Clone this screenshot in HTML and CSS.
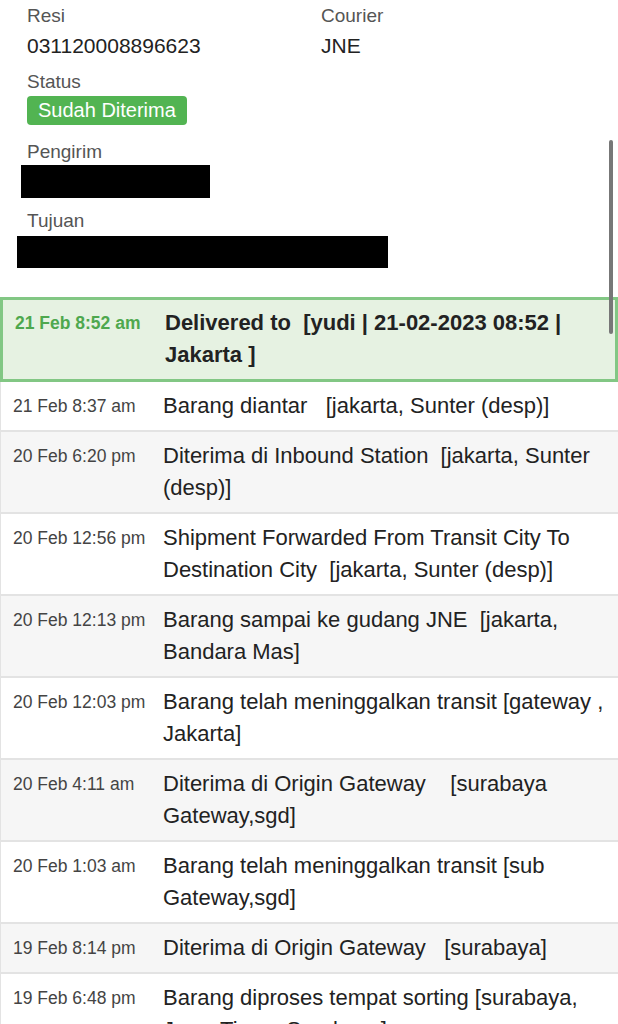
FILE: index.html
```html
<!DOCTYPE html>
<html>
<head>
<meta charset="utf-8">
<link rel="stylesheet" href="styles.css">
</head>
<body>
<div class="page">
  <section class="info">
    <div class="row2">
      <div class="field">
        <div class="label">Resi</div>
        <div class="value">031120008896623</div>
      </div>
      <div class="field">
        <div class="label">Courier</div>
        <div class="value">JNE</div>
      </div>
    </div>
    <div class="field status">
      <div class="label">Status</div>
      <span class="badge">Sudah Diterima</span>
    </div>
    <div class="field sender">
      <div class="label">Pengirim</div>
      <div class="redact redact-sender"></div>
    </div>
    <div class="field dest">
      <div class="label">Tujuan</div>
      <div class="redact redact-dest"></div>
    </div>
  </section>

  <div class="track">
    <div class="item current">
      <div class="date">21 Feb 8:52 am</div>
      <div class="desc">Delivered to&nbsp; [yudi | 21-02-2023 08:52 | Jakarta ]</div>
    </div>
    <div class="item">
      <div class="date">21 Feb 8:37 am</div>
      <div class="desc">Barang diantar&nbsp;&nbsp; [jakarta, Sunter (desp)]</div>
    </div>
    <div class="item alt">
      <div class="date">20 Feb 6:20 pm</div>
      <div class="desc">Diterima di Inbound Station&nbsp; [jakarta, Sunter (desp)]</div>
    </div>
    <div class="item">
      <div class="date">20 Feb 12:56 pm</div>
      <div class="desc">Shipment Forwarded From Transit City To Destination City&nbsp; [jakarta, Sunter (desp)]</div>
    </div>
    <div class="item alt">
      <div class="date">20 Feb 12:13 pm</div>
      <div class="desc">Barang sampai ke gudang JNE&nbsp; [jakarta, Bandara Mas]</div>
    </div>
    <div class="item">
      <div class="date">20 Feb 12:03 pm</div>
      <div class="desc">Barang telah meninggalkan transit [gateway , Jakarta]</div>
    </div>
    <div class="item alt">
      <div class="date">20 Feb 4:11 am</div>
      <div class="desc">Diterima di Origin Gateway&nbsp;&nbsp;&nbsp; [surabaya Gateway,sgd]</div>
    </div>
    <div class="item">
      <div class="date">20 Feb 1:03 am</div>
      <div class="desc">Barang telah meninggalkan transit [sub Gateway,sgd]</div>
    </div>
    <div class="item alt">
      <div class="date">19 Feb 8:14 pm</div>
      <div class="desc">Diterima di Origin Gateway&nbsp;&nbsp; [surabaya]</div>
    </div>
    <div class="item">
      <div class="date">19 Feb 6:48 pm</div>
      <div class="desc">Barang diproses tempat sorting [surabaya, Jawa Timur, Surabaya]</div>
    </div>
  </div>
  <div class="scrollbar"></div>
</div>
</body>
</html>
```

FILE: styles.css
```css
html, body {
  margin: 0;
  padding: 0;
  background: #ffffff;
}
body {
  font-family: "Liberation Sans", Arial, Helvetica, sans-serif;
  color: #222;
  overflow: hidden;
  height: 1024px;
}
.page {
  position: relative;
}
.info {
  padding: 4px 0 0 27px;
}
.row2 {
  display: grid;
  grid-template-columns: 294px 1fr;
}
.label {
  font-size: 19px;
  line-height: 24px;
  color: #555;
}
.value {
  margin-top: 3px;
  font-size: 21px;
  line-height: 30px;
  color: #222;
}
.status {
  margin-top: 9px;
}
.badge {
  display: inline-block;
  margin-top: 2px;
  background: #52b452;
  color: #fff;
  font-size: 20px;
  line-height: 29px;
  height: 29px;
  padding: 0 11px;
  border-radius: 4px;
}
.sender {
  margin-top: 15px;
}
.dest {
  margin-top: 11px;
}
.redact {
  background: #000;
}
.redact-sender {
  margin-top: 1px;
  margin-left: -6px;
  width: 189px;
  height: 33px;
}
.redact-dest {
  margin-top: 3px;
  margin-left: -10px;
  width: 371px;
  height: 32px;
}
.track {
  margin-top: 29px;
}
.item {
  display: flex;
  align-items: flex-start;
  padding: 8px 0;
  border-bottom: 2px solid #e3e3e3;
  border-left: 1px solid #e3e3e3;
  background: #fff;
}
.item.alt {
  background: #f6f6f6;
}
.item.current {
  background: #e6f2e2;
  border: 3px solid #82c784;
  padding: 7px 0 8px;
}
.date {
  flex: 0 0 162px;
  box-sizing: border-box;
  padding-left: 12px;
  font-size: 17.5px;
  line-height: 32px;
  color: #444;
  white-space: nowrap;
}
.desc {
  flex: 1;
  font-size: 22px;
  line-height: 32px;
  color: #222;
  padding-right: 8px;
}
.current .date {
  flex-basis: 162px;
  padding-left: 12px;
  color: #4ea84e;
  font-weight: bold;
}
.current .desc {
  font-weight: bold;
}
.scrollbar {
  position: absolute;
  left: 609px;
  top: 140px;
  width: 4px;
  height: 194px;
  border-radius: 2px;
  background: #777;
}
```
